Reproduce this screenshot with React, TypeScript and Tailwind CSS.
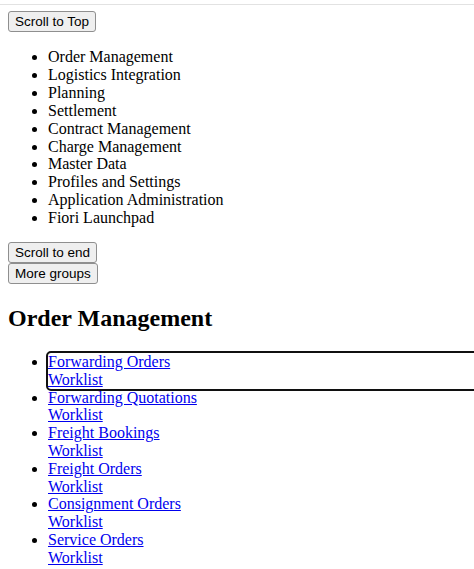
import React from 'react';

const groups = [
  'Order Management',
  'Logistics Integration',
  'Planning',
  'Settlement',
  'Contract Management',
  'Charge Management',
  'Master Data',
  'Profiles and Settings',
  'Application Administration',
  'Fiori Launchpad',
];

const apps = [
  'Forwarding Orders',
  'Forwarding Quotations',
  'Freight Bookings',
  'Freight Orders',
  'Consignment Orders',
  'Service Orders',
];

const Btn: React.FC<{ label: string }> = ({ label }) => (
  <button className="h-[21px] px-[6px] border border-[#8f8f8f] rounded-[3px] bg-[#efefef] text-[13.5px] leading-[15px] text-black font-['Liberation_Sans',Arial,sans-serif]">
    {label}
  </button>
);

const App: React.FC = () => {
  return (
    <div className="h-screen overflow-hidden bg-white text-black text-[16px] leading-[17.8px] font-['Liberation_Serif','Times_New_Roman',serif]">
      <div className="mt-1 h-px bg-[#e2e2e2]" />
      <div className="px-2 pt-[6px]">
        <Btn label="Scroll to Top" />
        <ul className="mt-4 mb-[15px] pl-10 list-disc leading-[17.9px]">
          {groups.map(g => (
            <li key={g}>{g}</li>
          ))}
        </ul>
        <div>
          <Btn label="Scroll to end" />
        </div>
        <div>
          <Btn label="More groups" />
        </div>
        <h2 className="mt-[20px] mb-[21px] text-[24px] leading-[28px] font-bold">Order Management</h2>
        <ul className="pl-10 list-disc">
          {apps.map((a, i) => (
            <li key={a}>
              <div
                className={
                  i === 0
                    ? 'w-[480px] rounded-[3px] outline-2 outline-[#101010]'
                    : ''
                }
              >
                <div>
                  <a href="#" className="text-[#0000ee] underline">{a}</a>
                </div>
                <div>
                  <a href="#" className="text-[#0000ee] underline">Worklist</a>
                </div>
              </div>
            </li>
          ))}
        </ul>
      </div>
    </div>
  );
};

export default App;
